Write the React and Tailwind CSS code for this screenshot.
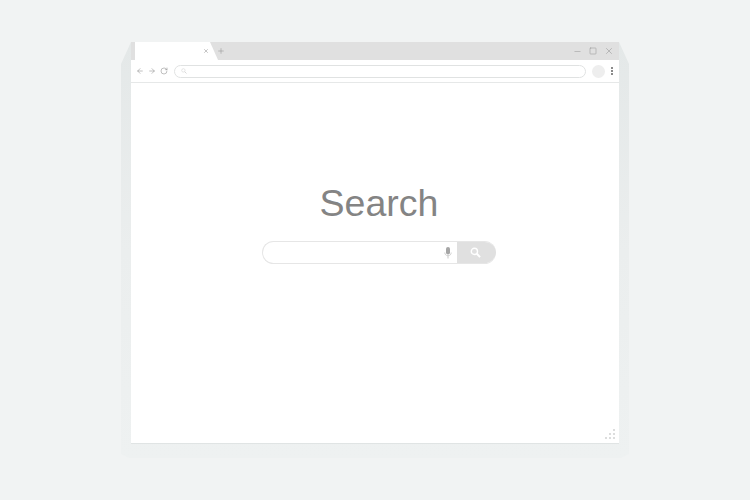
import { ArrowLeft, ArrowRight, RotateCw, Plus, X, Minus, Square } from 'lucide-react'

function Grip() {
  return (
    <svg width="14" height="11" viewBox="0 0 14 11" className="absolute right-[3px] bottom-[3px]" fill="#dcdddd">
      <rect x="11" y="0" width="2" height="2" />
      <rect x="7" y="4" width="2" height="2" />
      <rect x="11" y="4" width="2" height="2" />
      <rect x="3" y="8" width="2" height="2" />
      <rect x="7" y="8" width="2" height="2" />
      <rect x="11" y="8" width="2" height="2" />
    </svg>
  )
}

function Magnifier({ size, color, width }) {
  return (
    <svg width={size} height={size} viewBox="0 0 12 12" fill="none" stroke={color} strokeWidth={width}>
      <circle cx="4.8" cy="4.8" r="3.4" />
      <path d="M7.4 7.4 11 11" strokeWidth={width + 0.6} />
    </svg>
  )
}

function MicIcon() {
  return (
    <svg width="8" height="12" viewBox="0 0 8 12" fill="#a6a6a6">
      <rect x="2" y="0" width="4" height="7.5" rx="2" />
      <path d="M.8 5.5c0 2 1.3 3.2 3.2 3.2s3.2-1.2 3.2-3.2" fill="none" stroke="#c8c8c8" strokeWidth=".8" />
      <rect x="3.5" y="8.5" width="1" height="3" fill="#c8c8c8" />
    </svg>
  )
}

export default function App() {
  return (
    <div className="w-[750px] h-[500px] bg-[#f1f3f3] overflow-hidden pt-[42px] pl-[121px] font-['Liberation_Sans',sans-serif]">
      {/* soft shadow plate behind the window */}
      <div className="w-[508px] h-[416px] px-[10px] [clip-path:polygon(10px_0,498px_0,508px_22px,508px_412px,500px_416px,8px_416px,0_412px,0_22px)] bg-gradient-to-b from-[#e4e8e8] via-[#ebeeee] to-[#eef1f1]">
        <div className="w-[488px] h-[401px] bg-white flex flex-col relative shadow-[0_1px_0_0_#e0e4e4]">
          {/* title bar */}
          <div className="h-[18px] bg-[#e0e0e0] flex items-stretch pl-1 shrink-0">
            <div className="w-[83px] bg-white flex items-center justify-end pr-[9px] [clip-path:polygon(0_0,75px_0,83px_100%,0_100%)]">
              <X size={6} strokeWidth={2} className="text-[#8a8a8a]" />
            </div>
            <div className="flex items-center -ml-[1px]">
              <Plus size={8} strokeWidth={1.5} className="text-[#8c8c8c]" />
            </div>
            <div className="ml-auto flex items-center gap-[7px] pr-[5px] text-[#8c8c8c]">
              <Minus size={9} strokeWidth={1.2} />
              <Square size={8} strokeWidth={1.4} />
              <X size={10} strokeWidth={1.2} />
            </div>
          </div>

          {/* toolbar */}
          <div className="h-[23px] border-b border-[#e6e8e8] flex items-center pl-[5px] pr-[4px] shrink-0">
            <div className="flex items-center gap-[4px] text-[#8a8a8a]">
              <ArrowLeft size={8} strokeWidth={1.6} />
              <ArrowRight size={8} strokeWidth={1.6} />
              <RotateCw size={8} strokeWidth={1.6} />
            </div>
            <div className="ml-[6px] w-[412px] h-[13px] rounded-full border border-[#e0e2e2] flex items-center pl-[6px]">
              <Magnifier size={6} color="#cfcfcf" width={1} />
            </div>
            <div className="ml-[6px] w-[13px] h-[13px] rounded-full bg-[#eeeeee]" />
            <div className="ml-[6px] flex flex-col gap-[1px]">
              <div className="w-[2px] h-[2px] bg-[#8a8a8a]" />
              <div className="w-[2px] h-[2px] bg-[#8a8a8a]" />
              <div className="w-[2px] h-[2px] bg-[#8a8a8a]" />
            </div>
          </div>

          {/* page */}
          <div className="flex-1 flex flex-col items-center pt-[98px] pl-[7px]">
            <h1 className="text-[37.5px] leading-[44px] text-[#848484] translate-x-[0.5px]">Search</h1>
            <div className="mt-[16px] flex w-[234px] h-[23px] rounded-full overflow-hidden border border-[#e6e6e6] border-r-0">
              <div className="flex-1 flex items-center justify-end pr-[5px]">
                <MicIcon />
              </div>
              <div className="w-[39px] bg-[#e0e0e0] flex items-center pl-[13px]">
                <Magnifier size={11} color="#ffffff" width={1.5} />
              </div>
            </div>
          </div>

          <Grip />
        </div>
      </div>
    </div>
  )
}
